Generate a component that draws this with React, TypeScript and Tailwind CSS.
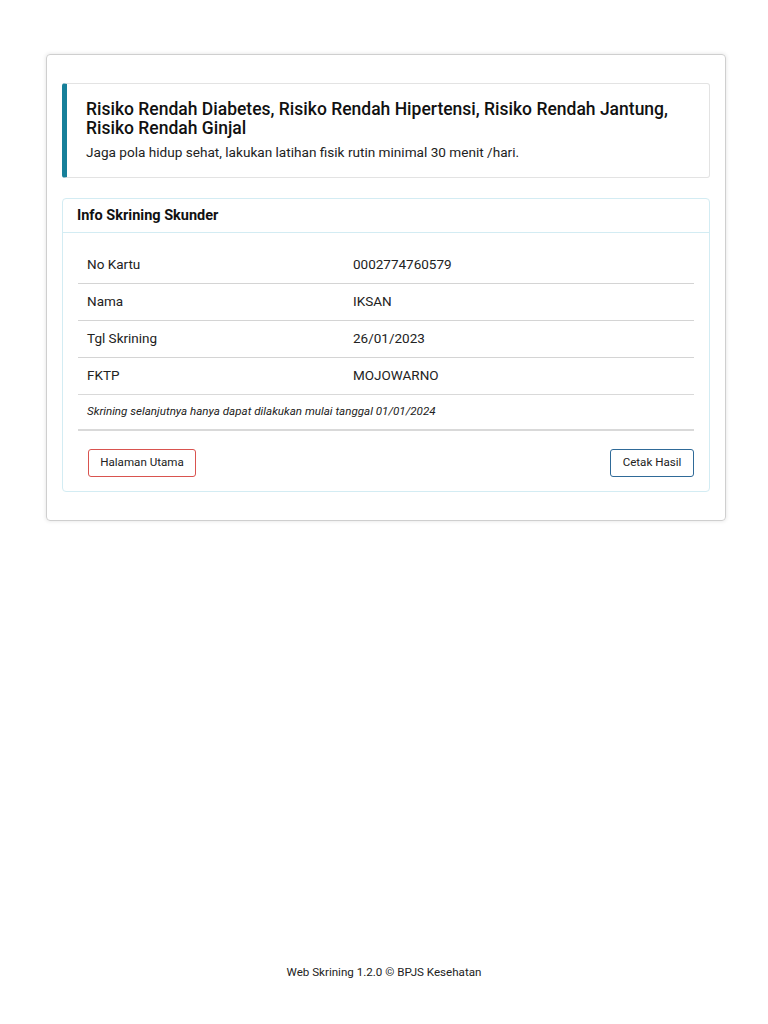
import React from 'react';

const rows: [string, string][] = [
  ['No Kartu', '0002774760579'],
  ['Nama', 'IKSAN'],
  ['Tgl Skrining', '26/01/2023'],
  ['FKTP', 'MOJOWARNO'],
];

export default function App() {
  return (
    <div className="min-h-[1024px] bg-white text-[#212529] flex flex-col" style={{ fontFamily: 'Roboto, "Liberation Sans", sans-serif' }}>
      <div className="ml-[46px] mt-[54px] w-[680px] rounded border border-[#cfcfcf] shadow-[0_0_4px_rgba(0,0,0,0.12)] px-[15px] pt-[28px] pb-[28px]">
        {/* Result alert */}
        <div className="rounded-[3px] border border-[#e3e3e3] border-l-[5px] border-l-[#17809a] pl-[19px] pr-4 pt-[16px] pb-[15px]">
          <h2 className="text-[17.5px] leading-[19px] font-medium text-[#111]">
            Risiko Rendah Diabetes, Risiko Rendah Hipertensi, Risiko Rendah Jantung, Risiko Rendah Ginjal
          </h2>
          <p className="mt-[4px] text-[13.6px] leading-[20px] text-[#222]">
            Jaga pola hidup sehat, lakukan latihan fisik rutin minimal 30 menit /hari.
          </p>
        </div>

        {/* Info card */}
        <div className="mt-[20px] rounded-[4px] border border-[#d3ecf3]">
          <div className="h-[34px] flex items-center px-[14px] border-b border-[#d3ecf3]">
            <h3 className="text-[14.5px] font-bold text-[#111]">Info Skrining Skunder</h3>
          </div>
          <div className="px-[15px] pt-[13px] pb-[14px]">
            <table className="w-full text-[13.5px] text-[#222]">
              <tbody>
                {rows.map(([k, v], i) => (
                  <tr key={k} className={i === 0 ? '' : 'border-t border-[#d4d4d4]'}>
                    <td className="w-[266px] h-[37px] pl-[9px]">{k}</td>
                    <td className="h-[37px] pl-[9px]">{v}</td>
                  </tr>
                ))}
                <tr className="border-t border-b-2 border-[#d9d9d9]">
                  <td colSpan={2} className="h-[36px] pl-[9px] text-[11.6px] italic">
                    Skrining selanjutnya hanya dapat dilakukan mulai tanggal 01/01/2024
                  </td>
                </tr>
              </tbody>
            </table>
            <div className="mt-[18px] flex justify-between pl-[10px]">
              <button className="h-[28px] w-[108px] rounded-[3px] border border-[#d9534f] text-[11.6px] text-[#222] bg-white">
                Halaman Utama
              </button>
              <button className="h-[28px] w-[84px] rounded-[3px] border border-[#2f6a98] text-[11.6px] text-[#222] bg-white">
                Cetak Hasil
              </button>
            </div>
          </div>
        </div>
      </div>

      <footer className="mt-auto mb-[43px] text-center text-[11.6px] text-[#222]">
        Web Skrining 1.2.0 © BPJS Kesehatan
      </footer>
    </div>
  );
}
